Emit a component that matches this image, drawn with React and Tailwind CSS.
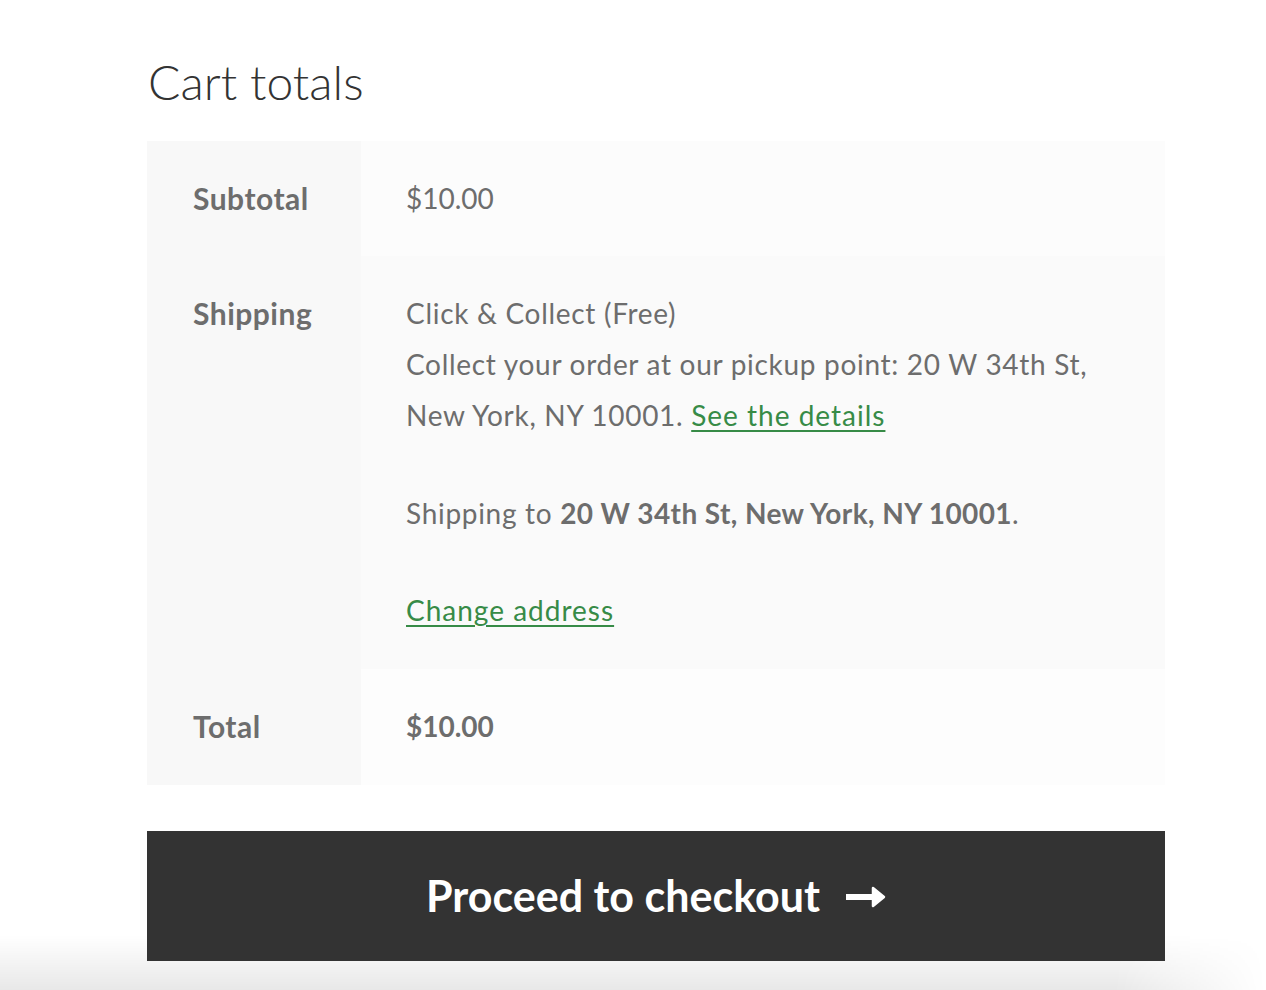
export default function App() {
  const font = { fontFamily: "Lato, 'Open Sans', sans-serif" };
  return (
    <div className="relative min-h-[990px] overflow-hidden bg-white" style={font}>
      <div className="pointer-events-none absolute bottom-0 left-0 h-[55px] w-full bg-[linear-gradient(to_bottom,rgba(0,0,0,0),rgba(0,0,0,0.09))] [mask-image:linear-gradient(to_right,black_88%,transparent_100%)]" />

      <div className="relative mx-[147px] w-[1018px] pt-[47px]">
        <h2 className="text-[48px] leading-[70px] font-light text-[#333333] pl-[1px]">Cart totals</h2>

        <table className="mt-[24px] w-full border-collapse text-[28px] text-[#6d6d6d]">
          <tbody>
            <tr>
              <th className="w-[214px] bg-[#f8f8f8] pl-[46px] py-[32px] text-left align-top text-[30px] font-bold leading-[51px] tracking-[0.5px]">
                Subtotal
              </th>
              <td className="bg-[#fcfcfc] pl-[45px] py-[32px] align-top leading-[51px]">$10.00</td>
            </tr>
            <tr>
              <th className="bg-[#f8f8f8] pl-[46px] py-[32px] text-left align-top text-[30px] font-bold leading-[51px] tracking-[0.5px]">
                Shipping
              </th>
              <td className="bg-[#fafafa] pl-[45px] pr-[40px] pt-[32px] pb-[33px] align-top leading-[51px] tracking-[0.7px]">
                <p>Click &amp; Collect (Free)</p>
                <p>
                  Collect your order at our pickup point: 20 W 34th St, New York, NY 10001.{" "}
                  <a href="#" className="text-[#378b47] underline decoration-[2px] underline-offset-[4px] tracking-[1px]">
                    See the details
                  </a>
                </p>
                <p className="mt-[47px]">
                  Shipping to <strong className="font-bold tracking-[0.4px]">20 W 34th St, New York, NY 10001</strong>.
                </p>
                <p className="mt-[46px]">
                  <a href="#" className="text-[#378b47] underline decoration-[2px] underline-offset-[4px] tracking-[1px]">
                    Change address
                  </a>
                </p>
              </td>
            </tr>
            <tr>
              <th className="bg-[#f8f8f8] pl-[46px] pt-[32px] pb-[33px] text-left align-top text-[30px] font-bold leading-[51px] tracking-[0.5px]">
                Total
              </th>
              <td className="bg-[#fdfdfd] pl-[45px] pt-[32px] pb-[33px] align-top font-bold leading-[51px]">$10.00</td>
            </tr>
          </tbody>
        </table>

        <a
          href="#"
          className="mt-[46px] flex h-[130px] w-full items-center justify-center gap-[26px] bg-[#333333] text-[43px] font-bold text-white"
        >
          <span>Proceed to checkout</span>
          <svg width="40" height="22" viewBox="0 0 40 22" className="mt-[2px]">
            <rect x="0" y="8" width="28" height="6" fill="#fff" />
            <path d="M27 2 L38 11 L27 20 Z" fill="#fff" strokeLinejoin="round" stroke="#fff" strokeWidth="2.5" />
          </svg>
        </a>
      </div>
    </div>
  );
}
